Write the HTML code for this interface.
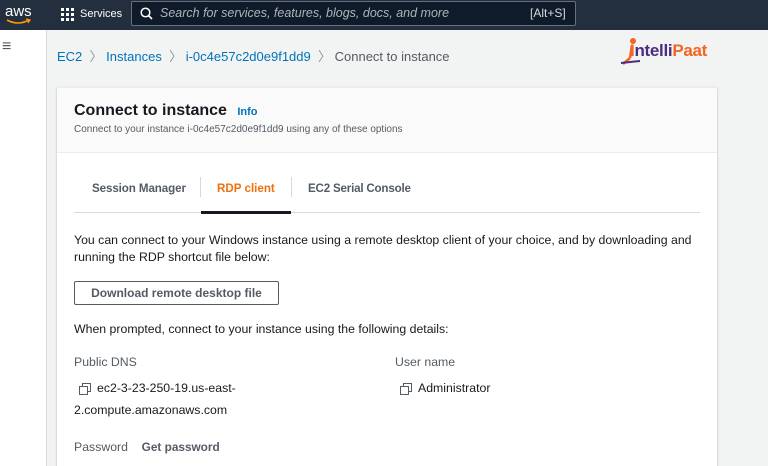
<!DOCTYPE html>
<html><head><meta charset="utf-8"><style>
*{margin:0;padding:0;box-sizing:border-box}
html,body{width:768px;height:466px;overflow:hidden}
body{background:#f2f3f3;font-family:"Liberation Sans",Arial,sans-serif;position:relative;color:#16191f}
.top{position:absolute;left:0;top:0;width:768px;height:30px;background:#232f3e}
.abs{position:absolute;white-space:nowrap}
.side{position:absolute;left:0;top:30px;width:47px;height:436px;background:#fff;border-right:1px solid #d5dbdb}
.card{position:absolute;left:57px;top:87px;width:660px;height:400px;background:#fff;box-shadow:0 1px 2px rgba(0,28,36,.3);border-top:1px solid #eaeded}
.chead{position:absolute;left:0;top:0;width:660px;height:65px;background:#fafafa;border-bottom:1px solid #eaeded}
.blue{color:#0073bb}
.copy{display:inline-block;width:10px;height:10px;position:relative;margin-right:8px;vertical-align:-1px}
.copy:before,.copy:after{content:"";position:absolute;width:7px;height:7px;border:1.3px solid #545b64}
.copy:before{left:3px;top:0}.copy:after{left:0;top:3px;background:#fff}
</style></head><body>
<div class="top">
 <div class="abs" style="left:5px;top:3px;color:#fff;font-size:15px">aws</div>
 <svg class="abs" style="left:6px;top:18px" width="26" height="8"><path d="M1 2 Q12 8 23 2" stroke="#f90" stroke-width="1.6" fill="none"/><path d="M20 1 L24 2 L22 5" stroke="#f90" stroke-width="1.3" fill="none"/></svg>
 <svg class="abs" style="left:61px;top:8px" width="14" height="14"><g fill="#fff"><rect x="0" y="0" width="3" height="3"/><rect x="5" y="0" width="3" height="3"/><rect x="10" y="0" width="3" height="3"/><rect x="0" y="5" width="3" height="3"/><rect x="5" y="5" width="3" height="3"/><rect x="10" y="5" width="3" height="3"/><rect x="0" y="10" width="3" height="3"/><rect x="5" y="10" width="3" height="3"/><rect x="10" y="10" width="3" height="3"/></g></svg>
 <div class="abs" style="left:80px;top:8px;color:#fff;font-size:11px">Services</div>
 <div class="abs" style="left:131px;top:1px;width:445px;height:25px;border:1px solid #687078;border-radius:2px;background:#0f1b2a"></div>
 <svg class="abs" style="left:140px;top:7px" width="13" height="13"><circle cx="5.5" cy="5.5" r="4.3" stroke="#fff" stroke-width="1.5" fill="none"/><path d="M8.5 8.5 L12 12" stroke="#fff" stroke-width="1.6"/></svg>
 <div class="abs" style="left:160px;top:6px;color:#aab7b8;font-size:12.5px;font-style:italic">Search for services, features, blogs, docs, and more</div>
 <div class="abs" style="left:530px;top:6px;color:#d5dbdb;font-size:12px">[Alt+S]</div>
</div>
<div class="side"><div class="abs" style="left:2px;top:8px;font-size:16px;color:#545b64">≡</div></div>
<div class="abs" style="left:57px;top:46px;font-size:13px;color:#545b64"><span class="blue">EC2</span> &nbsp;<span style="color:#879596">〉</span> <span class="blue">Instances</span> &nbsp;<span style="color:#879596">〉</span> <span class="blue">i-0c4e57c2d0e9f1dd9</span> &nbsp;<span style="color:#879596">〉</span> Connect to instance</div>
<div class="abs" style="left:630px;top:41px;font-size:17px;font-weight:bold;color:#4b2c83;letter-spacing:-.3px"><span style="color:#f26522">I</span>ntelli<span style="color:#f26522">Paat</span></div>
<svg class="abs" style="left:620px;top:36px" width="20" height="32"><circle cx="13" cy="5" r="3" fill="#f26522"/><path d="M12 9 L10 22 M10 22 L3 28" stroke="#f26522" stroke-width="2.5" fill="none"/><path d="M1 27 L20 25" stroke="#4b2c83" stroke-width="2"/></svg>
<div class="card">
 <div class="chead">
  <div class="abs" style="left:17px;top:14px;font-size:16px;font-weight:bold">Connect to instance <span class="blue" style="font-size:11px;margin-left:6px">Info</span></div>
  <div class="abs" style="left:17px;top:36px;font-size:10px;color:#545b64">Connect to your instance i-0c4e57c2d0e9f1dd9 using any of these options</div>
 </div>
 <div class="abs" style="left:17px;top:124px;width:626px;height:1px;background:#d5dbdb"></div>
 <div class="abs" style="left:35px;top:94px;font-size:11.6px;font-weight:bold;color:#545b64;letter-spacing:-.1px">Session Manager</div>
 <div class="abs" style="left:143px;top:89px;width:1px;height:20px;background:#d5dbdb"></div>
 <div class="abs" style="left:160px;top:94px;font-size:11.6px;font-weight:bold;color:#ec7211">RDP client</div>
 <div class="abs" style="left:144px;top:123px;width:90px;height:3px;background:#16191f"></div>
 <div class="abs" style="left:234px;top:89px;width:1px;height:20px;background:#d5dbdb"></div>
 <div class="abs" style="left:251px;top:94px;font-size:11.6px;font-weight:bold;color:#545b64;letter-spacing:-.2px">EC2 Serial Console</div>
 <div class="abs" style="left:17px;top:144px;font-size:12.3px;line-height:17px;white-space:normal;width:630px">You can connect to your Windows instance using a remote desktop client of your choice, and by downloading and running the RDP shortcut file below:</div>
 <div class="abs" style="left:17px;top:193px;width:205px;height:24px;border:1px solid #545b64;border-radius:2px;font-size:12px;font-weight:bold;color:#545b64;text-align:center;line-height:22px">Download remote desktop file</div>
 <div class="abs" style="left:17px;top:234px;font-size:12.3px">When prompted, connect to your instance using the following details:</div>
 <div class="abs" style="left:17px;top:267px;font-size:12.3px;color:#545b64">Public DNS</div>
 <div class="abs" style="left:22px;top:293px;font-size:12.3px"><span class="copy"></span>ec2-3-23-250-19.us-east-</div>
 <div class="abs" style="left:17px;top:315px;font-size:12.3px">2.compute.amazonaws.com</div>
 <div class="abs" style="left:338px;top:267px;font-size:12.3px;color:#545b64">User name</div>
 <div class="abs" style="left:343px;top:293px;font-size:12.3px"><span class="copy"></span>Administrator</div>
 <div class="abs" style="left:17px;top:352px;font-size:12.3px;color:#545b64">Password &nbsp;&nbsp;&nbsp;<span style="font-weight:bold;font-size:11.8px">Get password</span></div>
</div>
</body></html>
